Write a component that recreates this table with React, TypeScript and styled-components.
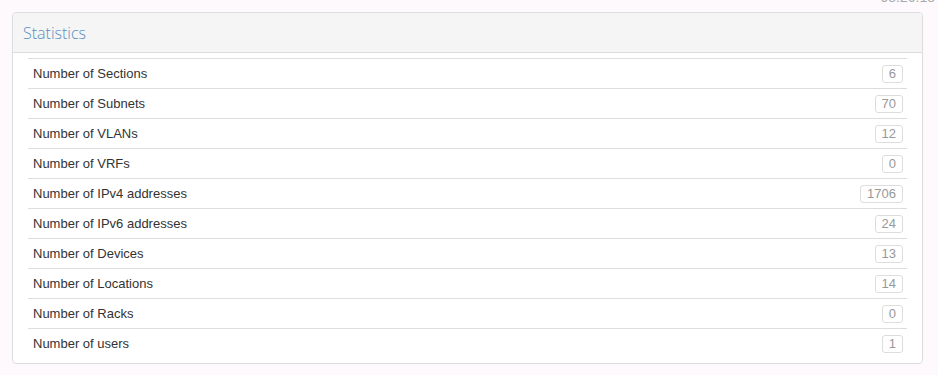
import React from "react";
import styled, { createGlobalStyle } from "styled-components";

const Global = createGlobalStyle`
  html, body { margin: 0; padding: 0; background: #fdf9fd; }
  body { font-family: "Liberation Sans", Arial, sans-serif; color: #333; }
`;

const Page = styled.div`
  padding: 0 15px 0 12px;
  width: 911px;
`;

const Clock = styled.div`
  height: 12px;
  margin-right: -12px;
  text-align: right;
  font-size: 14px;
  line-height: 12px;
  color: #aaa;
  overflow: hidden;
  position: relative;
`;

const ClockText = styled.span`
  position: relative;
  top: -9px;
`;

const Panel = styled.section`
  border: 1px solid #dddddd;
  border-radius: 4px;
  background: #fff;
  overflow: hidden;
`;

const PanelHeading = styled.header`
  background: #f5f5f5;
  border-bottom: 1px solid #dddddd;
  height: 39px;
  display: flex;
  align-items: center;
  padding: 0 10px;
`;

const Title = styled.h3`
  margin: 0;
  font-family: "Open Sans", "Liberation Sans", sans-serif;
  font-weight: 300;
  font-size: 16px;
  color: #5b8fc2;
`;

const Body = styled.div`
  padding: 5px 15px 5px 15px;
`;

const Table = styled.div`
  display: flex;
  flex-direction: column;
`;

const Row = styled.div`
  display: flex;
  align-items: center;
  justify-content: space-between;
  height: 29px;
  border-top: 1px solid #dddddd;
  padding: 0 4px 0 5px;
`;

const Label = styled.span`
  font-size: 13px;
  color: #333;
  margin-top: -1px;
`;

const Badge = styled.span`
  display: inline-block;
  border: 1px solid #dddddd;
  border-radius: 3px;
  padding: 0 6px;
  height: 16px;
  line-height: 16px;
  font-size: 13px;
  color: #999;
  background: #fff;
  margin-top: 1px;
`;

const stats: [string, string][] = [
  ["Number of Sections", "6"],
  ["Number of Subnets", "70"],
  ["Number of VLANs", "12"],
  ["Number of VRFs", "0"],
  ["Number of IPv4 addresses", "1706"],
  ["Number of IPv6 addresses", "24"],
  ["Number of Devices", "13"],
  ["Number of Locations", "14"],
  ["Number of Racks", "0"],
  ["Number of users", "1"],
];

export default function App() {
  return (
    <>
      <Global />
      <Page>
        <Clock>
          <ClockText>08:26:18</ClockText>
        </Clock>
        <Panel>
          <PanelHeading>
            <Title>Statistics</Title>
          </PanelHeading>
          <Body>
            <Table>
              {stats.map(([k, v]) => (
                <Row key={k}>
                  <Label>{k}</Label>
                  <Badge>{v}</Badge>
                </Row>
              ))}
            </Table>
          </Body>
        </Panel>
      </Page>
    </>
  );
}
